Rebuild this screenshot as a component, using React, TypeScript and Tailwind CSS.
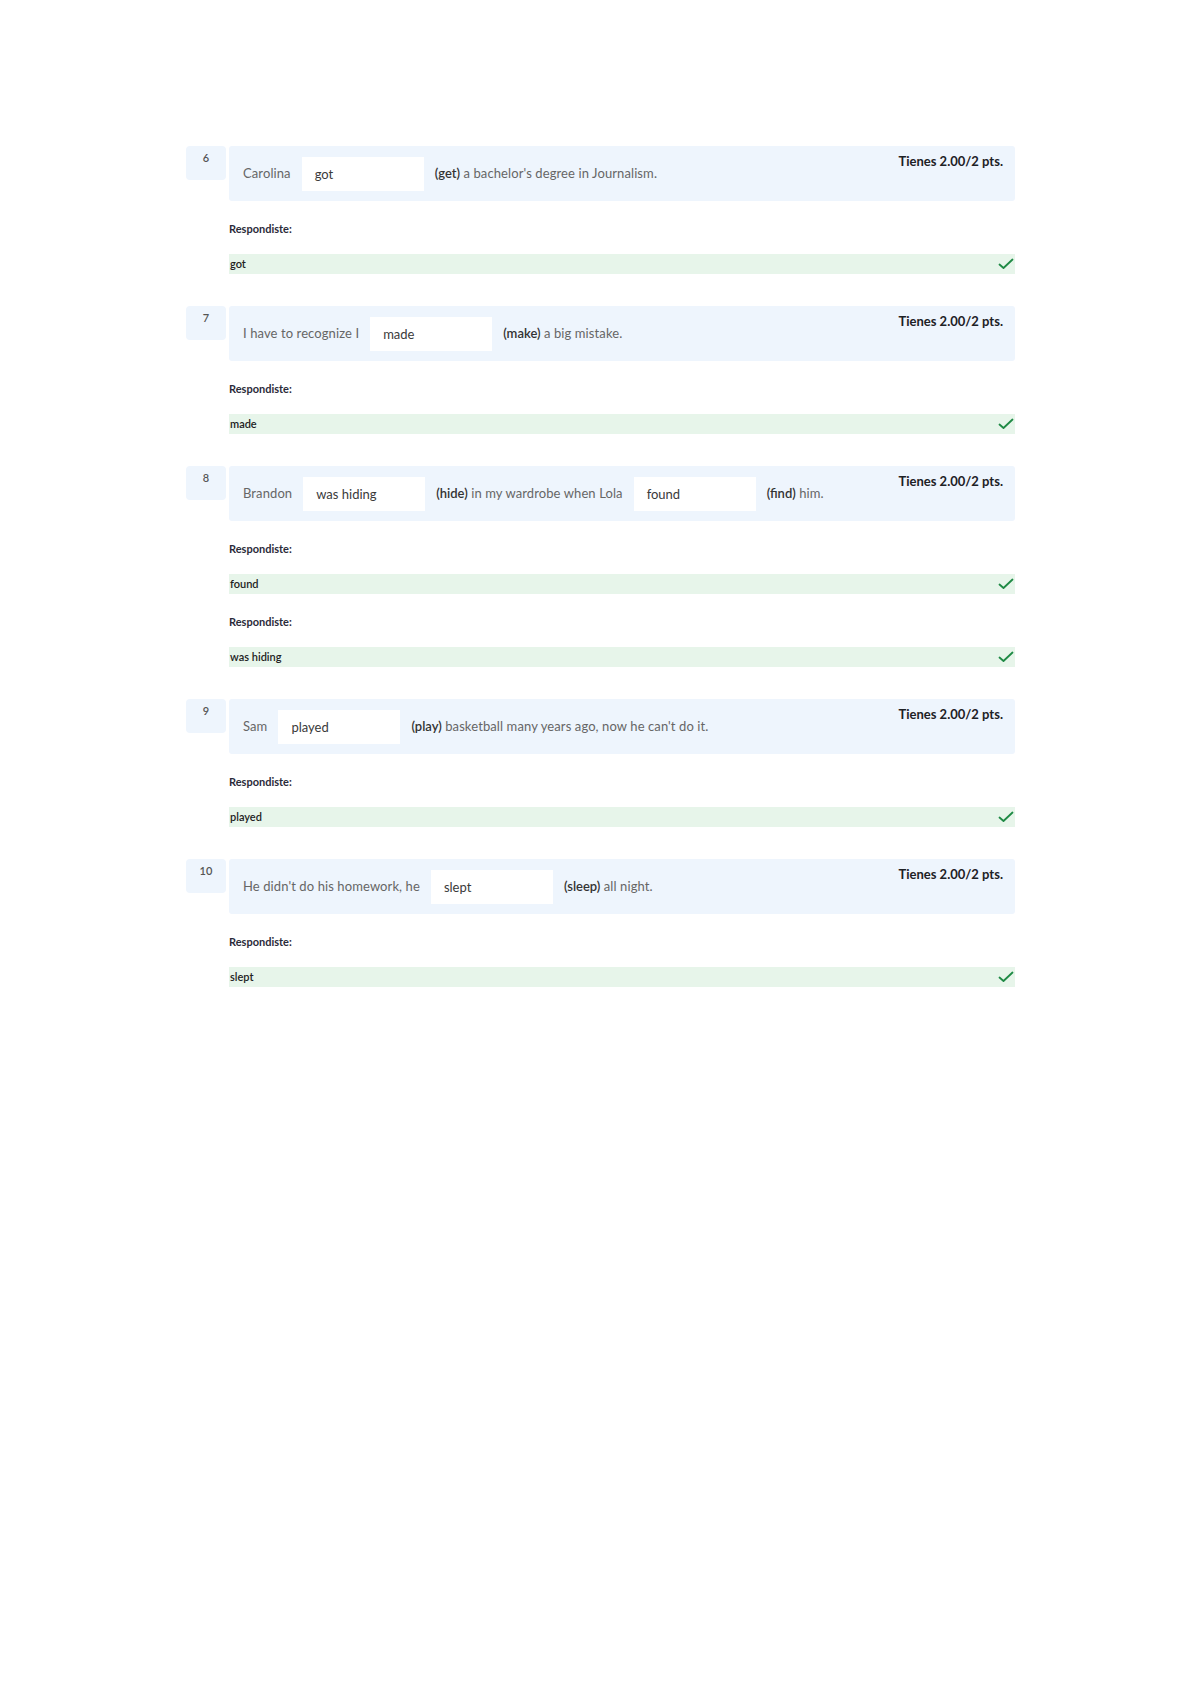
import React from "react";

type Part = { t: "text"; v: string; bold?: boolean } | { t: "input"; v: string };

type Q = { n: number; parts: Part[]; answers: string[] };

const questions: Q[] = [
  {
    n: 6,
    parts: [
      { t: "text", v: "Carolina" },
      { t: "input", v: "got" },
      { t: "text", v: "(get)", bold: true },
      { t: "text", v: "a bachelor's degree in Journalism." },
    ],
    answers: ["got"],
  },
  {
    n: 7,
    parts: [
      { t: "text", v: "I have to recognize I" },
      { t: "input", v: "made" },
      { t: "text", v: "(make)", bold: true },
      { t: "text", v: "a big mistake." },
    ],
    answers: ["made"],
  },
  {
    n: 8,
    parts: [
      { t: "text", v: "Brandon" },
      { t: "input", v: "was hiding" },
      { t: "text", v: "(hide)", bold: true },
      { t: "text", v: "in my wardrobe when Lola" },
      { t: "input", v: "found" },
      { t: "text", v: "(find)", bold: true },
      { t: "text", v: "him." },
    ],
    answers: ["found", "was hiding"],
  },
  {
    n: 9,
    parts: [
      { t: "text", v: "Sam" },
      { t: "input", v: "played" },
      { t: "text", v: "(play)", bold: true },
      { t: "text", v: "basketball many years ago, now he can't do it." },
    ],
    answers: ["played"],
  },
  {
    n: 10,
    parts: [
      { t: "text", v: "He didn't do his homework, he" },
      { t: "input", v: "slept" },
      { t: "text", v: "(sleep)", bold: true },
      { t: "text", v: "all night." },
    ],
    answers: ["slept"],
  },
];

function Check() {
  return (
    <svg width="16" height="12" viewBox="0 0 16 12" fill="none">
      <polyline
        points="1.5,6.5 5.5,10 14.5,1.5"
        stroke="#1f8a45"
        strokeWidth="1.8"
        strokeLinecap="round"
        strokeLinejoin="round"
      />
    </svg>
  );
}

function Sentence({ parts }: { parts: Part[] }) {
  const nodes: React.ReactNode[] = [];
  parts.forEach((p, i) => {
    if (p.t === "input") {
      nodes.push(
        <div
          key={i}
          className="mx-[11px] flex h-[34px] w-[122px] shrink-0 items-center bg-white pl-[13px] pt-[2px] text-[13px] text-[#3a3a3a]"
        >
          {p.v}
        </div>
      );
    } else {
      const prev = parts[i - 1];
      const space = prev && prev.t === "text" ? "\u00a0" : "";
      nodes.push(
        <span
          key={i}
          className={
            p.bold
              ? "whitespace-pre text-[13px] font-semibold text-[#333]"
              : "whitespace-pre text-[13px] tracking-[0.1px] text-[#666]"
          }
        >
          {space}
          {p.v}
        </span>
      );
    }
  });
  return <div className="flex items-center">{nodes}</div>;
}

function Question({ q }: { q: Q }) {
  return (
    <div className="flex gap-[3px]">
      <div className="h-[34px] w-[40px] shrink-0 rounded-[4px] bg-[#eef5fd] pt-[5px] text-center text-[11px] font-semibold leading-[14px] text-[#555]">
        {q.n}
      </div>
      <div className="flex-1">
        <div className="flex h-[55px] justify-between rounded-[3px] bg-[#eef5fd] pl-[14px] pr-[12px]">
          <Sentence parts={q.parts} />
          <div className="pt-[7px] text-[13px] font-bold leading-[16px] text-[#1d2125]">
            Tienes 2.00/2 pts.
          </div>
        </div>
        {q.answers.map((a, i) => (
          <div key={i} className="pt-[20px]">
            <div className="h-[16px] text-[11px] font-bold leading-[16px] text-[#2b2b3a]">
              Respondiste:
            </div>
            <div className="mt-[17px] flex h-[20px] items-center justify-between bg-[#e7f5ea] pl-[1px] pr-[1px]">
              <span className="text-[11px] font-semibold text-[#222]">{a}</span>
              <Check />
            </div>
          </div>
        ))}
      </div>
    </div>
  );
}

export default function App() {
  return (
    <div
      className="min-h-[1696px] w-[1200px] bg-white pt-[146px]"
      style={{ fontFamily: "Lato, 'Open Sans', 'Liberation Sans', sans-serif" }}
    >
      <div className="ml-[186px] flex w-[829px] flex-col gap-[32px]">
        {questions.map((q) => (
          <Question key={q.n} q={q} />
        ))}
      </div>
    </div>
  );
}
